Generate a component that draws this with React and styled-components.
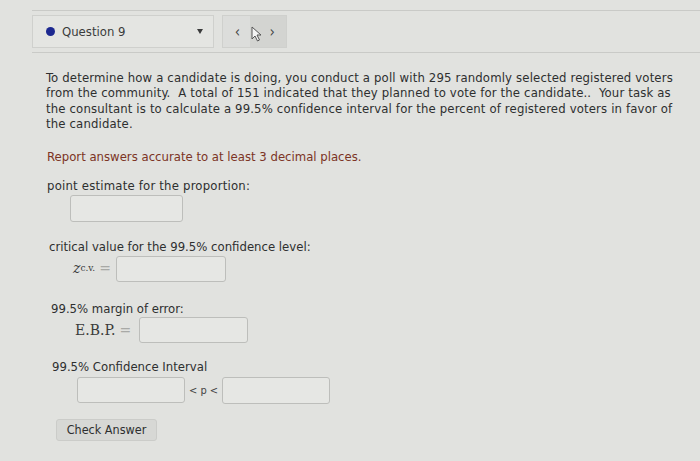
import React from "react";
import styled, { createGlobalStyle } from "styled-components";

const Global = createGlobalStyle`
  html, body { margin: 0; padding: 0; }
  body {
    background: #e1e2df;
    font-family: "DejaVu Sans Condensed", "DejaVu Sans", sans-serif;
    color: #2e2f2f;
    width: 700px;
    height: 461px;
    overflow: hidden;
  }
`;

const Page = styled.div`
  padding-top: 10px;
`;

const Header = styled.div`
  margin-left: 32px;
  border-top: 1px solid #c9cac7;
  border-bottom: 1px solid #c9cac7;
  padding: 4px 0 4px 0;
  display: flex;
  gap: 8px;
  height: 33px;
`;

const QuestionBox = styled.div`
  width: 182px;
  border: 1px solid #cfd0cd;
  background: #e4e5e2;
  display: flex;
  align-items: center;
  padding: 0 10px 0 13px;
  box-sizing: border-box;
  font-size: 13px;
  color: #3a3b3b;
`;

const Dot = styled.span`
  width: 9px;
  height: 9px;
  border-radius: 50%;
  background: #1c2890;
  margin-right: 7px;
`;

const Caret = styled.span`
  margin-left: auto;
  width: 0;
  height: 0;
  border-left: 3.5px solid transparent;
  border-right: 3.5px solid transparent;
  border-top: 5px solid #3a3b3b;
`;

const Nav = styled.div`
  width: 63px;
  border: 1px solid #cfd0cd;
  display: flex;
`;

const NavHalf = styled.div`
  flex: 1;
  display: flex;
  align-items: center;
  justify-content: ${(p) => (p.$active ? "flex-end" : "center")};
  padding-right: ${(p) => (p.$active ? "11px" : "0")};
  padding-left: ${(p) => (p.$active ? "0" : "2px")};
  background: ${(p) => (p.$active ? "#d3d4d1" : "#dcdddb")};
  color: #444;
  font-size: 15px;
  position: relative;
`;

const Cursor = styled.svg`
  position: absolute;
  left: 1px;
  top: 10px;
`;

const Body = styled.div`
  padding: 17px 10px 0 46px;
  font-size: 13px;
  line-height: 15.3px;
`;

const Para = styled.p`
  margin: 0;
  letter-spacing: 0.15px;
  white-space: nowrap;
`;

const Note = styled.p`
  margin: 18px 0 0 1px;
  color: #7c3425;
`;

const Label = styled.div`
  margin: ${(p) => p.$mt}px 0 0 ${(p) => p.$ml}px;
  letter-spacing: ${(p) => p.$ls || 0}px;
`;

const Row = styled.div`
  display: flex;
  align-items: center;
  margin: ${(p) => p.$mt}px 0 0 ${(p) => p.$ml}px;
`;

const Field = styled.div`
  width: ${(p) => p.$w}px;
  height: ${(p) => p.$h}px;
  border: 1px solid #bdbebb;
  border-radius: 3px;
  background: #e6e7e4;
  box-sizing: border-box;
`;

const MathLabel = styled.span`
  font-family: "DejaVu Serif", "Liberation Serif", serif;
  font-size: 14px;
  color: #3a3b3b;
  margin-right: ${(p) => p.$mr || 5}px;
  display: flex;
  align-items: center;
`;

const Eq = styled.span`
  color: #a8a9a6;
  margin-left: 4px;
  font-family: "DejaVu Serif", serif;
`;

const Sub = styled.sub`
  font-size: 9px;
  vertical-align: -3px;
`;

const Between = styled.span`
  font-size: 11px;
  margin: 0 4px;
  color: #444;
`;

const Button = styled.button`
  margin: 15px 0 0 10px;
  width: 101px;
  height: 22px;
  border: 1px solid #cbccc9;
  border-radius: 3px;
  background: #d7d8d5;
  font-family: "DejaVu Sans Condensed", "DejaVu Sans", sans-serif;
  font-size: 12.5px;
  color: #2e2f2f;
  padding: 0;
`;

export default function App() {
  return (
    <Page>
      <Global />
      <Header>
        <QuestionBox>
          <Dot />
          Question 9
          <Caret />
        </QuestionBox>
        <Nav>
          <NavHalf>‹</NavHalf>
          <NavHalf $active>
            ›
            <Cursor width="12" height="17" viewBox="0 0 12 17">
              <path d="M1 1 L1 13 L4 10 L6.5 15 L8.5 14 L6 9 L10 9 Z" fill="#f4f4f4" stroke="#555" strokeWidth="1" />
            </Cursor>
          </NavHalf>
        </Nav>
      </Header>
      <Body>
        <Para>
          To determine how a candidate is doing, you conduct a poll with 295 randomly selected registered voters
          <br />
          from the community.&nbsp; A total of 151 indicated that they planned to vote for the candidate..&nbsp; Your task as
          <br />
          the consultant is to calculate a 99.5% confidence interval for the percent of registered voters in favor of
          <br />
          the candidate.
        </Para>
        <Note>Report answers accurate to at least 3 decimal places.</Note>
        <Label $mt={14} $ml={1} $ls={0.2}>point estimate for the proportion:</Label>
        <Row $mt={1} $ml={24}>
          <Field $w={113} $h={27} />
        </Row>
        <Label $mt={17} $ml={3}>critical value for the 99.5% confidence level:</Label>
        <Row $mt={2} $ml={27}>
          <MathLabel>
            <i>z</i><Sub>c.v.</Sub><Eq>=</Eq>
          </MathLabel>
          <Field $w={110} $h={26} />
        </Row>
        <Label $mt={19} $ml={5}>99.5% margin of error:</Label>
        <Row $mt={1} $ml={29}>
          <MathLabel $mr={8}>
            E.B.P.<Eq>=</Eq>
          </MathLabel>
          <Field $w={109} $h={26} />
        </Row>
        <Label $mt={16} $ml={6}>99.5% Confidence Interval</Label>
        <Row $mt={2} $ml={31}>
          <Field $w={108} $h={26} />
          <Between>&lt; p &lt;</Between>
          <Field $w={108} $h={27} />
        </Row>
        <Button>Check Answer</Button>
      </Body>
    </Page>
  );
}
